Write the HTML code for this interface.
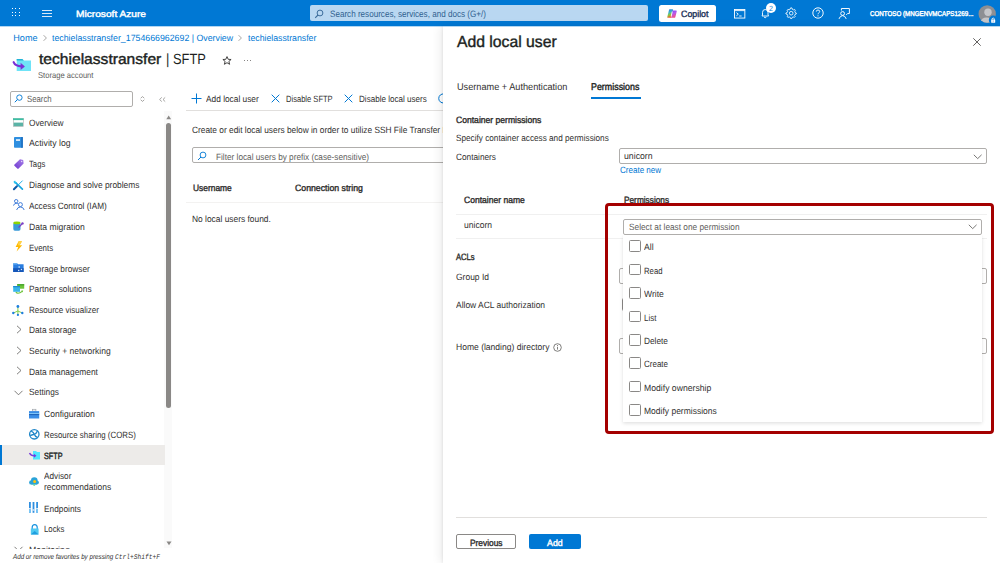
<!DOCTYPE html>
<html><head><meta charset="utf-8"><style>
html,body{margin:0;padding:0;}
body{width:1000px;height:563px;position:relative;overflow:hidden;background:#fff;font-family:"Liberation Sans",sans-serif;text-rendering:geometricPrecision;}
.t{position:absolute;white-space:nowrap;line-height:1;transform-origin:0 0;}
svg{overflow:visible;}
</style></head><body>
<div style="position:absolute;left:0px;top:0px;width:1000px;height:26px;background:#0078d4;"></div>
<div style="position:absolute;left:11.8px;top:8.3px;width:1.1px;height:1.1px;background:#fff;"></div>
<div style="position:absolute;left:11.8px;top:11.700000000000001px;width:1.1px;height:1.1px;background:#fff;"></div>
<div style="position:absolute;left:11.8px;top:15.100000000000001px;width:1.1px;height:1.1px;background:#fff;"></div>
<div style="position:absolute;left:15.200000000000001px;top:8.3px;width:1.1px;height:1.1px;background:#fff;"></div>
<div style="position:absolute;left:15.200000000000001px;top:11.700000000000001px;width:1.1px;height:1.1px;background:#fff;"></div>
<div style="position:absolute;left:15.200000000000001px;top:15.100000000000001px;width:1.1px;height:1.1px;background:#fff;"></div>
<div style="position:absolute;left:18.6px;top:8.3px;width:1.1px;height:1.1px;background:#fff;"></div>
<div style="position:absolute;left:18.6px;top:11.700000000000001px;width:1.1px;height:1.1px;background:#fff;"></div>
<div style="position:absolute;left:18.6px;top:15.100000000000001px;width:1.1px;height:1.1px;background:#fff;"></div>
<div style="position:absolute;left:42px;top:9.8px;width:9.5px;height:1px;background:#dbe9f7;"></div>
<div style="position:absolute;left:42px;top:12.8px;width:9.5px;height:1px;background:#dbe9f7;"></div>
<div style="position:absolute;left:42px;top:15.8px;width:9.5px;height:1px;background:#dbe9f7;"></div>
<div class="t" style="left:76px;top:9.78px;font-size:9.0px;font-weight:normal;font-style:normal;color:#fff;transform:scaleX(1.1286);-webkit-text-stroke:0.4px #fff;">Microsoft Azure</div>
<div style="position:absolute;left:310px;top:5px;width:338.4px;height:16.4px;background:#b9d7f1;border-radius:2px;"></div>
<svg style="position:absolute;left:314px;top:8.5px" width="10" height="10" viewBox="0 0 10 10"><circle cx="6" cy="4" r="2.9" fill="none" stroke="#3d6d9c" stroke-width="1"/><line x1="4" y1="6" x2="1.2" y2="8.8" stroke="#3d6d9c" stroke-width="1.1"/></svg>
<div class="t" style="left:329.5px;top:9.63px;font-size:9.3px;font-weight:normal;font-style:normal;color:#2f5f8f;transform:scaleX(0.8710);">Search resources, services, and docs (G+/)</div>
<div style="position:absolute;left:659px;top:5px;width:57.4px;height:16.5px;background:#fff;border-radius:2.5px;"></div>
<svg style="position:absolute;left:666.7px;top:8.8px" width="10.2" height="9" viewBox="0 0 10.2 9">
<defs><linearGradient id="cg1" x1="0" y1="0" x2="0.3" y2="1"><stop offset="0" stop-color="#1f6fe8"/><stop offset=".45" stop-color="#3fb6c8"/><stop offset=".7" stop-color="#8acb3a"/><stop offset="1" stop-color="#f4572a"/></linearGradient>
<linearGradient id="cg2" x1="0" y1="0" x2="0.4" y2="1"><stop offset="0" stop-color="#6a4cf0"/><stop offset=".5" stop-color="#b35af0"/><stop offset="1" stop-color="#f0508a"/></linearGradient></defs>
<path d="M2.6 0.2 H5.6 Q6.3 0.2 6.1 0.9 L4.0 8.8 H1.0 Q0.1 8.8 0.3 7.9 L2.0 0.9 Q2.2 0.2 2.6 0.2Z" fill="url(#cg1)"/>
<path d="M5.2 1.4 H9.0 Q10.0 1.4 9.8 2.3 L8.3 8.2 Q8.1 8.8 7.4 8.8 H3.3 Q4.3 8.4 4.6 7.2 Z" fill="url(#cg2)"/>
<path d="M5.3 2.6 L4.1 7.4" stroke="#fff" stroke-width="0.9"/>
</svg>
<div class="t" style="left:680.7px;top:9.80px;font-size:9.1px;font-weight:normal;font-style:normal;color:#26365a;transform:scaleX(0.9708);-webkit-text-stroke:0.4px #26365a;">Copilot</div>
<svg style="position:absolute;left:734px;top:8.5px" width="12" height="10" viewBox="0 0 12 10"><rect x="0.45" y="0.45" width="10.4" height="8.6" fill="none" stroke="#fff" stroke-width="0.9"/><line x1="0.5" y1="1.6" x2="10.8" y2="1.6" stroke="#fff" stroke-width="0.9"/><path d="M2.4 3.6 L4.3 5.2 L2.4 6.8" fill="none" stroke="#fff" stroke-width="0.9"/><line x1="5.2" y1="7" x2="7.6" y2="7" stroke="#fff" stroke-width="0.9"/></svg>
<svg style="position:absolute;left:760px;top:8px" width="11" height="11" viewBox="0 0 11 11"><path d="M2 8 L2.5 7 V4.5 Q2.5 1.5 5.2 1.5 Q8 1.5 8 4.5 V7 L8.6 8 Z" fill="none" stroke="#fff" stroke-width="0.9"/><path d="M4 9 Q5.2 10.5 6.4 9" fill="none" stroke="#fff" stroke-width="0.9"/></svg>
<div style="position:absolute;left:765.6px;top:2.8px;width:10px;height:10px;border-radius:50%;background:#fff;"></div>
<div class="t" style="left:768.6px;top:5.35px;font-size:7.5px;font-weight:normal;font-style:normal;color:#0078d4;transform:scaleX(0.9450);">2</div>
<svg style="position:absolute;left:785.3px;top:7px" width="12" height="12" viewBox="0 0 12 12"><path d="M6 0.8 L7 1 L7.3 2.3 L8.4 2.9 L9.6 2.4 L10.3 3.2 L9.8 4.5 L10.2 5.5 L11.3 6 L11.2 7 L10 7.4 L9.6 8.5 L10.2 9.6 L9.4 10.4 L8.2 9.9 L7.2 10.4 L6.8 11.5 L5.6 11.5 L5.2 10.3 L4.2 9.9 L3 10.4 L2.2 9.6 L2.7 8.4 L2.3 7.4 L1 7 L0.9 6 L2.2 5.5 L2.6 4.4 L2.1 3.2 L2.9 2.4 L4.1 2.9 L5.1 2.3 L5.4 1Z" fill="none" stroke="#fff" stroke-width="0.85" stroke-linejoin="round"/><circle cx="6.2" cy="6.2" r="1.8" fill="none" stroke="#fff" stroke-width="0.85"/></svg>
<svg style="position:absolute;left:811.5px;top:7px" width="12" height="12" viewBox="0 0 12 12"><circle cx="6" cy="6" r="5.2" fill="none" stroke="#fff" stroke-width="0.95"/><path d="M4.3 4.6 Q4.3 3 6 3 Q7.7 3 7.7 4.5 Q7.7 5.4 6.8 5.9 Q6 6.3 6 7.3" fill="none" stroke="#fff" stroke-width="0.9"/><circle cx="6" cy="8.8" r="0.6" fill="#fff"/></svg>
<svg style="position:absolute;left:837.5px;top:7.5px" width="13" height="12" viewBox="0 0 13 12"><path d="M3.4 2.5 V0.5 H11.4 V5.5 L9.6 5.6 L8.2 6.8" fill="none" stroke="#fff" stroke-width="0.95"/><circle cx="4.6" cy="5.5" r="1.9" fill="none" stroke="#fff" stroke-width="0.95"/><path d="M1 10.9 Q2 7.8 4.6 7.6 Q7.2 7.8 8.2 10.9" fill="none" stroke="#fff" stroke-width="0.95"/></svg>
<div class="t" style="left:869.8px;top:11.07px;font-size:7.0px;font-weight:normal;font-style:normal;color:#fff;transform:scaleX(0.8871);-webkit-text-stroke:0.4px #fff;">CONTOSO (MNGENVMCAPS1269...</div>
<svg style="position:absolute;left:978px;top:4.5px" width="20" height="20" viewBox="0 0 20 20">
<defs><clipPath id="avc"><circle cx="9.2" cy="9" r="8.7"/></clipPath></defs>
<circle cx="9.2" cy="9" r="8.7" fill="#8d8f93"/>
<g clip-path="url(#avc)"><circle cx="10" cy="7.2" r="3.7" fill="#c4c6ca"/><ellipse cx="8.5" cy="16.8" rx="5.8" ry="4.4" fill="#c4c6ca"/></g>
<circle cx="15.2" cy="15" r="4.4" fill="#0078d4"/>
<rect x="13.2" y="14.5" width="4" height="3.2" rx="0.5" fill="#fff"/>
<path d="M13.9 14.6 V13.8 Q15.2 12.2 16.5 13.8 V14.6" fill="none" stroke="#fff" stroke-width="0.8"/>
<rect x="14.7" y="15.4" width="1" height="1.4" fill="#8aaee0"/>
</svg>
<div class="t" style="left:13.3px;top:33.80px;font-size:9.1px;font-weight:normal;font-style:normal;color:#0078d4;">Home</div>
<svg style="position:absolute;left:42px;top:34.3px" width="6" height="8" viewBox="0 0 6 8"><path d="M1.6 1.2 L4.4 4 L1.6 6.8" fill="none" stroke="#8a8886" stroke-width="0.75"/></svg>
<div class="t" style="left:52px;top:33.80px;font-size:9.1px;font-weight:normal;font-style:normal;color:#0078d4;transform:scaleX(0.9663);">techielasstransfer_1754666962692 | Overview</div>
<svg style="position:absolute;left:237px;top:34.3px" width="6" height="8" viewBox="0 0 6 8"><path d="M1.6 1.2 L4.4 4 L1.6 6.8" fill="none" stroke="#8a8886" stroke-width="0.75"/></svg>
<div class="t" style="left:248.1px;top:33.80px;font-size:9.1px;font-weight:normal;font-style:normal;color:#0078d4;transform:scaleX(0.9591);">techielasstransfer</div>
<svg style="position:absolute;left:12px;top:58px" width="21" height="15" viewBox="0 0 21 15">
<path d="M4.7 1 H10.3 L11.8 2.5 H19 V13 H4.7 Z" fill="#6fe3f7"/>
<path d="M4.7 1 H10.3 L11.8 2.5 H4.7Z" fill="#22b3d6"/>
<path d="M1.6 4.2 Q3.2 8.3 9.5 8.4" fill="none" stroke="#7a2fd6" stroke-width="2.1" stroke-linecap="round"/>
<path d="M8.6 4.8 L12.9 8.4 L8.6 12Z" fill="#7a2fd6"/>
</svg>
<div class="t" style="left:38.5px;top:52.87px;font-size:14.8px;font-weight:normal;font-style:normal;color:#201f1e;transform:scaleX(1.0544);-webkit-text-stroke:0.4px #201f1e;">techielasstransfer</div>
<div class="t" style="left:165.5px;top:52.87px;font-size:14.8px;font-weight:normal;font-style:normal;color:#201f1e;transform:scaleX(0.8715);">| SFTP</div>
<svg style="position:absolute;left:222px;top:56px" width="10" height="9" viewBox="0 0 10 9"><path d="M5 0.6 L6.2 3.3 L9.1 3.5 L6.9 5.4 L7.6 8.3 L5 6.7 L2.4 8.3 L3.1 5.4 L0.9 3.5 L3.8 3.3Z" fill="none" stroke="#323130" stroke-width="0.9" stroke-linejoin="round"/></svg>
<div style="position:absolute;left:244.2px;top:60px;width:1.1px;height:1.1px;background:#605e5c;border-radius:50%;"></div>
<div style="position:absolute;left:247.2px;top:60px;width:1.1px;height:1.1px;background:#605e5c;border-radius:50%;"></div>
<div style="position:absolute;left:250.2px;top:60px;width:1.1px;height:1.1px;background:#605e5c;border-radius:50%;"></div>
<div class="t" style="left:38px;top:71.47px;font-size:8.3px;font-weight:normal;font-style:normal;color:#605e5c;transform:scaleX(0.9181);">Storage account</div>
<div style="position:absolute;left:10.4px;top:91px;width:122.2px;height:15.6px;box-sizing:border-box;border:1px solid #b0aeac;border-radius:2px;background:#fff;"></div>
<svg style="position:absolute;left:14px;top:94px" width="9" height="9" viewBox="0 0 9 9"><circle cx="5.4" cy="3.6" r="2.7" fill="none" stroke="#0078d4" stroke-width="0.9"/><line x1="3.5" y1="5.5" x2="0.8" y2="8.2" stroke="#0078d4" stroke-width="1"/></svg>
<div class="t" style="left:26.6px;top:94.90px;font-size:9.1px;font-weight:normal;font-style:normal;color:#605e5c;transform:scaleX(0.8566);">Search</div>
<svg style="position:absolute;left:140px;top:95.5px" width="5" height="6" viewBox="0 0 5 6"><path d="M0.7 2.2 L2.5 0.6 L4.3 2.2 M0.7 3.8 L2.5 5.4 L4.3 3.8" fill="none" stroke="#8a8886" stroke-width="0.75"/></svg>
<svg style="position:absolute;left:158.8px;top:96.5px" width="7" height="5" viewBox="0 0 7 5"><path d="M2.8 0.4 L0.6 2.5 L2.8 4.6 M6.2 0.4 L4 2.5 L6.2 4.6" fill="none" stroke="#8a8886" stroke-width="0.75"/></svg>
<div style="position:absolute;left:164.2px;top:111px;width:8px;height:437px;background:#fafafa;"></div>
<svg style="position:absolute;left:165.8px;top:114.6px" width="6" height="5" viewBox="0 0 6 5"><path d="M0.3 4.3 L2.7 0.6 L5.1 4.3Z" fill="#8a8886"/></svg>
<div style="position:absolute;left:166px;top:122.8px;width:5px;height:285.2px;background:#8a8886;border-radius:2.5px;"></div>
<svg style="position:absolute;left:165.5px;top:541px" width="6" height="5" viewBox="0 0 6 5"><path d="M0.5 0.5 L3 4.2 L5.5 0.5Z" fill="#8a8886"/></svg>
<div style="position:absolute;left:0px;top:444.5px;width:164.7px;height:20.5px;background:#edebe9;"></div>
<div style="position:absolute;left:0px;top:444.5px;width:1.8px;height:20.5px;background:#0078d4;"></div>
<div class="t" style="left:28.6px;top:118.70px;font-size:9.1px;font-weight:normal;font-style:normal;color:#323130;transform:scaleX(0.9097);">Overview</div>
<div class="t" style="left:28.6px;top:139.10px;font-size:9.1px;font-weight:normal;font-style:normal;color:#323130;transform:scaleX(0.9588);">Activity log</div>
<div class="t" style="left:28.6px;top:159.90px;font-size:9.1px;font-weight:normal;font-style:normal;color:#323130;transform:scaleX(0.8480);">Tags</div>
<div class="t" style="left:28.6px;top:181.00px;font-size:9.1px;font-weight:normal;font-style:normal;color:#323130;transform:scaleX(0.9217);">Diagnose and solve problems</div>
<div class="t" style="left:28.6px;top:202.00px;font-size:9.1px;font-weight:normal;font-style:normal;color:#323130;transform:scaleX(0.9050);">Access Control (IAM)</div>
<div class="t" style="left:28.6px;top:222.70px;font-size:9.1px;font-weight:normal;font-style:normal;color:#323130;transform:scaleX(0.9446);">Data migration</div>
<div class="t" style="left:28.6px;top:243.50px;font-size:9.1px;font-weight:normal;font-style:normal;color:#323130;transform:scaleX(0.8663);">Events</div>
<div class="t" style="left:28.6px;top:264.50px;font-size:9.1px;font-weight:normal;font-style:normal;color:#323130;transform:scaleX(0.9106);">Storage browser</div>
<div class="t" style="left:28.6px;top:285.20px;font-size:9.1px;font-weight:normal;font-style:normal;color:#323130;transform:scaleX(0.9167);">Partner solutions</div>
<div class="t" style="left:28.6px;top:306.00px;font-size:9.1px;font-weight:normal;font-style:normal;color:#323130;transform:scaleX(0.8816);">Resource visualizer</div>
<div class="t" style="left:28.6px;top:325.70px;font-size:9.1px;font-weight:normal;font-style:normal;color:#323130;transform:scaleX(0.9116);">Data storage</div>
<div class="t" style="left:28.6px;top:346.70px;font-size:9.1px;font-weight:normal;font-style:normal;color:#323130;transform:scaleX(0.9364);">Security + networking</div>
<div class="t" style="left:28.6px;top:367.50px;font-size:9.1px;font-weight:normal;font-style:normal;color:#323130;transform:scaleX(0.9216);">Data management</div>
<div class="t" style="left:28.6px;top:388.00px;font-size:9.1px;font-weight:normal;font-style:normal;color:#323130;transform:scaleX(0.9124);">Settings</div>
<div class="t" style="left:44.4px;top:410.10px;font-size:9.1px;font-weight:normal;font-style:normal;color:#323130;transform:scaleX(0.9403);">Configuration</div>
<div class="t" style="left:44.4px;top:431.20px;font-size:9.1px;font-weight:normal;font-style:normal;color:#323130;transform:scaleX(0.8653);">Resource sharing (CORS)</div>
<div class="t" style="left:44.4px;top:451.90px;font-size:9.1px;font-weight:normal;font-style:normal;color:#201f1e;transform:scaleX(0.7954);-webkit-text-stroke:0.4px #201f1e;">SFTP</div>
<div class="t" style="left:44.4px;top:472.20px;font-size:9.1px;font-weight:normal;font-style:normal;color:#323130;transform:scaleX(0.9030);">Advisor</div>
<div class="t" style="left:44.4px;top:483.40px;font-size:9.1px;font-weight:normal;font-style:normal;color:#323130;transform:scaleX(0.9304);">recommendations</div>
<div class="t" style="left:44.4px;top:504.60px;font-size:9.1px;font-weight:normal;font-style:normal;color:#323130;transform:scaleX(0.9141);">Endpoints</div>
<div class="t" style="left:44.4px;top:525.20px;font-size:9.1px;font-weight:normal;font-style:normal;color:#323130;transform:scaleX(0.8581);">Locks</div>
<div style="position:absolute;left:0;top:540px;width:164px;height:8.9px;overflow:hidden;">
<div class="t" style="left:28.9px;top:6.10px;font-size:9.1px;font-weight:normal;font-style:normal;color:#323130;transform:scaleX(0.9602);">Monitoring</div>
<svg style="position:absolute;left:14px;top:6.3px" width="9" height="6" viewBox="0 0 9 6"><path d="M0.5 0.8 L4.5 4.8 L8.5 0.8" fill="none" stroke="#605e5c" stroke-width="0.8"/></svg>
</div>
<div class="t" style="left:12.8px;top:553.11px;font-size:7.2px;font-weight:normal;font-style:italic;color:#323130;transform:scaleX(0.8702);">Add or remove favorites by pressing</div>
<div class="t" style="left:114.8px;top:554.68px;font-size:7.2px;font-weight:normal;font-style:italic;color:#323130;transform:scaleX(0.8699);font-family:'Liberation Mono',monospace;">Ctrl+Shift+F</div>
<svg style="position:absolute;left:16px;top:324.5px" width="6" height="9" viewBox="0 0 6 9"><path d="M1 0.8 L5 4.5 L1 8.2" fill="none" stroke="#605e5c" stroke-width="0.8"/></svg>
<svg style="position:absolute;left:16px;top:345.5px" width="6" height="9" viewBox="0 0 6 9"><path d="M1 0.8 L5 4.5 L1 8.2" fill="none" stroke="#605e5c" stroke-width="0.8"/></svg>
<svg style="position:absolute;left:16px;top:366.3px" width="6" height="9" viewBox="0 0 6 9"><path d="M1 0.8 L5 4.5 L1 8.2" fill="none" stroke="#605e5c" stroke-width="0.8"/></svg>
<svg style="position:absolute;left:14px;top:390px" width="9" height="6" viewBox="0 0 9 6"><path d="M0.5 0.8 L4.5 4.8 L8.5 0.8" fill="none" stroke="#605e5c" stroke-width="0.8"/></svg>
<svg style="position:absolute;left:13px;top:117.5px" width="11" height="10" viewBox="0 0 11 10"><rect x="0.3" y="0.6" width="10" height="7.8" fill="#fff" stroke="#b0b0b0" stroke-width="0.6"/><rect x="0" y="0.3" width="10.6" height="1.8" fill="#3cbfa4"/><rect x="0.6" y="4.6" width="9.4" height="3.6" fill="#5bb3a6"/></svg>
<svg style="position:absolute;left:13.8px;top:137.4px" width="10" height="11" viewBox="0 0 10 11"><rect x="0" y="0" width="8.8" height="10.8" rx="0.8" fill="#2f8fe0"/><rect x="7.2" y="0" width="1.6" height="10.8" fill="#1f6fc0"/><rect x="2" y="2.3" width="4" height="1.5" fill="#fff"/></svg>
<svg style="position:absolute;left:13.5px;top:158.6px" width="10" height="10" viewBox="0 0 10 10"><defs><linearGradient id="tg" x1="0" y1="1" x2="1" y2="0"><stop offset="0" stop-color="#6f3ad0"/><stop offset="1" stop-color="#a67ee8"/></linearGradient></defs><path d="M6 0.3 L9.2 1 L9.6 4.4 L4.6 9.6 Q4 10.2 3.3 9.6 L0.4 6.8 Q-0.1 6.2 0.5 5.6 Z" fill="url(#tg)"/><circle cx="7.6" cy="2.5" r="0.75" fill="#e0d4f8"/></svg>
<svg style="position:absolute;left:13.3px;top:179.8px" width="11" height="11" viewBox="0 0 11 11"><path d="M2.6 2.6 L9.4 9.2" stroke="#1aa7e0" stroke-width="1.7" stroke-linecap="round"/><path d="M0.6 1.4 Q0.4 3.6 2.6 3.8 Q4 3.6 3.9 2.2 L2.6 2.1 L2.4 0.8 Q1.2 0.4 0.6 1.4Z" fill="#2ac2ee"/><path d="M9.6 0.6 L3.6 6.6" stroke="#22b0e8" stroke-width="1"/><path d="M3.9 6.3 L0.9 9.3" stroke="#0f5aa8" stroke-width="2" stroke-linecap="round"/></svg>
<svg style="position:absolute;left:12.6px;top:199.4px" width="12" height="12" viewBox="0 0 12 12"><circle cx="3.2" cy="2.2" r="1.7" fill="none" stroke="#3a78d8" stroke-width="0.95"/><path d="M0.5 6.6 Q1 4.4 3.2 4.3 Q4.6 4.3 5.2 5" fill="none" stroke="#3a78d8" stroke-width="0.95"/><circle cx="7.4" cy="5.6" r="2" fill="none" stroke="#3a78d8" stroke-width="0.95"/><path d="M3.6 11 Q4.4 8 7.4 8 Q10.4 8 11.2 11" fill="none" stroke="#3a78d8" stroke-width="0.95"/></svg>
<svg style="position:absolute;left:12.7px;top:221.3px" width="11" height="11" viewBox="0 0 11 11"><rect x="0.3" y="1.4" width="7.2" height="8.3" rx="1.6" fill="#3a9ad9"/><ellipse cx="3.9" cy="1.9" rx="3.6" ry="1.4" fill="#8fd400"/><line x1="5.6" y1="6.5" x2="9.3" y2="2.7" stroke="#7b3fc4" stroke-width="1.2"/><circle cx="9.5" cy="2.4" r="1.2" fill="#7b3fc4"/></svg>
<svg style="position:absolute;left:14.3px;top:241.3px" width="9" height="11" viewBox="0 0 9 11"><path d="M4.6 0.3 H8 L5.6 4.2 H8.2 L2.6 10.6 L4.2 6 H1.6 Z" fill="#ffb900"/><path d="M4.6 0.3 H8 L5.6 4.2 H4 Z" fill="#ffd24a"/></svg>
<svg style="position:absolute;left:12.8px;top:263.3px" width="11" height="10" viewBox="0 0 11 10"><path d="M0.2 0.2 H4 L5 1.2 H10.6 V9 H0.2Z" fill="#2a7de0"/><rect x="0.2" y="0.2" width="4" height="1.3" fill="#6fb6f5"/><rect x="0.2" y="5.2" width="10.4" height="3.8" fill="#1556b8"/><rect x="5.5" y="3.3" width="1.4" height="1.4" fill="#cfe6fb"/><rect x="7.8" y="5.8" width="1.3" height="1.3" fill="#cfe6fb"/><rect x="5" y="6.8" width="1.3" height="1.3" fill="#cfe6fb"/></svg>
<svg style="position:absolute;left:12.6px;top:283.6px" width="12" height="11" viewBox="0 0 12 11"><rect x="4.2" y="0.2" width="7" height="4.5" fill="#6cc43a"/><rect x="4.2" y="0.2" width="7" height="1.2" fill="#3f9e2a"/><rect x="0.2" y="2" width="6.8" height="5.8" fill="#38b6ea"/><rect x="0.2" y="2" width="6.8" height="1.3" fill="#1f8ad0"/><path d="M2.8 8.2 Q5 10.6 9.4 7.2" fill="none" stroke="#6cc43a" stroke-width="1.1"/><path d="M8.2 6.6 L10.2 6.4 L9.6 8.4Z" fill="#6cc43a"/></svg>
<svg style="position:absolute;left:12.3px;top:304.5px" width="12" height="11" viewBox="0 0 12 11"><path d="M5.9 1.5 V6 M1.3 8 L5.9 6 L10.3 8 M5.9 6 V9.8" stroke="#7acb3a" stroke-width="0.9" fill="none"/><circle cx="5.9" cy="1.5" r="1.4" fill="#1f7fe0"/><circle cx="1.3" cy="8" r="1.2" fill="#1f7fe0"/><circle cx="10.3" cy="8" r="1.2" fill="#1f7fe0"/><circle cx="5.9" cy="9.9" r="1.1" fill="#1f7fe0"/></svg>
<svg style="position:absolute;left:28.9px;top:408.6px" width="11" height="10" viewBox="0 0 11 10"><rect x="3.5" y="0.3" width="3.4" height="1.8" fill="none" stroke="#a0a6ad" stroke-width="0.7"/><rect x="0" y="2.1" width="10.2" height="7.4" fill="#3a8de6"/><rect x="0" y="4.2" width="10.2" height="1" fill="#8fd0fa"/><rect x="0" y="5.2" width="10.2" height="0.9" fill="#1459b0"/></svg>
<svg style="position:absolute;left:28.7px;top:429.3px" width="11" height="11" viewBox="0 0 11 11"><circle cx="5.3" cy="5.3" r="4.7" fill="none" stroke="#1f86c8" stroke-width="1.3"/><path d="M1.2 6.6 Q3.6 5.6 5.3 5.3 Q7.4 4.6 8.6 1.8 M2.2 2.2 Q4.5 3.2 5.3 5.3 Q6 7.5 8.8 8.6" fill="none" stroke="#1f86c8" stroke-width="1.4"/></svg>
<svg style="position:absolute;left:28.5px;top:450px" width="12" height="11" viewBox="0 0 12 11"><path d="M4 1 H7 L8 2 H11 V9.5 H4 Z" fill="#50e6ff"/><path d="M0.5 3 Q2 6 5.5 5.8" fill="none" stroke="#773adc" stroke-width="1.4"/><path d="M5 3.8 L7.5 5.8 L5 7.8Z" fill="#773adc"/></svg>
<svg style="position:absolute;left:28.8px;top:477.3px" width="10" height="10" viewBox="0 0 10 10"><circle cx="5.3" cy="3.6" r="3.3" fill="#2aa3d8"/><circle cx="2.3" cy="5.4" r="2.2" fill="#2aa3d8"/><circle cx="7.9" cy="5.6" r="2" fill="#2aa3d8"/><rect x="2.3" y="5" width="5.6" height="2.6" fill="#2aa3d8"/><circle cx="5.6" cy="4.6" r="1.5" fill="#ffc20e"/><path d="M3.6 7.2 Q5.2 10.6 6.8 7.2Z" fill="#5fd0a0"/></svg>
<svg style="position:absolute;left:29.4px;top:502.2px" width="9" height="11" viewBox="0 0 9 11"><rect x="0" y="0" width="1.8" height="10.8" fill="#2f8fe0"/><rect x="3.6" y="0" width="1.8" height="10.8" fill="#2f8fe0"/><rect x="7.2" y="0" width="1.8" height="10.8" fill="#2f8fe0"/><rect x="0" y="6.2" width="1.8" height="1.2" fill="#fff"/><rect x="3.6" y="7.4" width="1.8" height="1.2" fill="#fff"/><rect x="7.2" y="6.2" width="1.8" height="1.2" fill="#fff"/><rect x="0" y="7.4" width="1.8" height="3.4" fill="#7cc8f5"/><rect x="7.2" y="7.4" width="1.8" height="3.4" fill="#7cc8f5"/></svg>
<svg style="position:absolute;left:29.5px;top:523.5px" width="10" height="11" viewBox="0 0 10 11"><path d="M2.2 5 V3.2 Q2.2 0.7 4.7 0.7 Q7.2 0.7 7.2 3.2 V5" fill="none" stroke="#1490df" stroke-width="1.2"/><rect x="0.8" y="4.5" width="7.8" height="6" fill="#50c8f0"/><path d="M0.8 10.5 L4.7 7 L8.6 10.5Z" fill="#1f9ee0"/></svg>
<svg style="position:absolute;left:190.5px;top:93px" width="11" height="11" viewBox="0 0 11 11"><path d="M5.5 0.5 V10.5 M0.5 5.5 H10.5" stroke="#0078d4" stroke-width="1"/></svg>
<div class="t" style="left:206.3px;top:94.60px;font-size:9.1px;font-weight:normal;font-style:normal;color:#323130;transform:scaleX(0.9156);">Add local user</div>
<svg style="position:absolute;left:270.5px;top:93.5px" width="9" height="9" viewBox="0 0 9 9"><path d="M0.7 0.7 L8.3 8.3 M8.3 0.7 L0.7 8.3" stroke="#0078d4" stroke-width="1"/></svg>
<div class="t" style="left:285.7px;top:94.60px;font-size:9.1px;font-weight:normal;font-style:normal;color:#323130;transform:scaleX(0.8319);">Disable SFTP</div>
<svg style="position:absolute;left:344px;top:93.5px" width="9" height="9" viewBox="0 0 9 9"><path d="M0.7 0.7 L8.3 8.3 M8.3 0.7 L0.7 8.3" stroke="#0078d4" stroke-width="1"/></svg>
<div class="t" style="left:359px;top:94.60px;font-size:9.1px;font-weight:normal;font-style:normal;color:#323130;transform:scaleX(0.8890);">Disable local users</div>
<svg style="position:absolute;left:437.5px;top:93px" width="11" height="11" viewBox="0 0 11 11"><path d="M6 1 A4.5 4.5 0 1 0 9.5 4" fill="none" stroke="#0078d4" stroke-width="1"/></svg>
<div style="position:absolute;left:185.6px;top:109.7px;width:260px;height:1px;background:#e1dfdd;"></div>
<div class="t" style="left:192px;top:126.20px;font-size:9.1px;font-weight:normal;font-style:normal;color:#323130;transform:scaleX(0.9159);">Create or edit local users below in order to utilize SSH File Transfer Protocol</div>
<div style="position:absolute;left:192.2px;top:147.2px;width:260px;height:16.1px;box-sizing:border-box;border:1px solid #b0aeac;border-radius:2px;background:#fff;"></div>
<svg style="position:absolute;left:196.5px;top:150.5px" width="10" height="10" viewBox="0 0 10 10"><circle cx="6" cy="4" r="2.9" fill="none" stroke="#0078d4" stroke-width="0.9"/><line x1="4" y1="6" x2="1" y2="9" stroke="#0078d4" stroke-width="1"/></svg>
<div class="t" style="left:215.5px;top:152.70px;font-size:9.1px;font-weight:normal;font-style:normal;color:#605e5c;transform:scaleX(0.9043);">Filter local users by prefix (case-sensitive)</div>
<div class="t" style="left:193px;top:184.20px;font-size:9.1px;font-weight:normal;font-style:normal;color:#323130;transform:scaleX(0.9243);-webkit-text-stroke:0.4px #323130;">Username</div>
<div class="t" style="left:295.1px;top:184.20px;font-size:9.1px;font-weight:normal;font-style:normal;color:#323130;transform:scaleX(0.9588);-webkit-text-stroke:0.4px #323130;">Connection string</div>
<div style="position:absolute;left:185.6px;top:201.8px;width:260px;height:1px;background:#f3f2f1;"></div>
<div class="t" style="left:191.7px;top:215.20px;font-size:9.1px;font-weight:normal;font-style:normal;color:#323130;transform:scaleX(0.9229);">No local users found.</div>
<div style="position:absolute;left:443.4px;top:26px;width:556.6px;height:537px;background:#fff;box-shadow:-3px 0 9px rgba(0,0,0,0.07),-1px 0 2px rgba(0,0,0,0.06);"></div>
<div class="t" style="left:457px;top:34.66px;font-size:16px;font-weight:normal;font-style:normal;color:#201f1e;transform:scaleX(0.9833);-webkit-text-stroke:0.4px #201f1e;">Add local user</div>
<svg style="position:absolute;left:973px;top:38px" width="8" height="8" viewBox="0 0 8 8"><path d="M0.3 0.3 L7.7 7.7 M7.7 0.3 L0.3 7.7" stroke="#484644" stroke-width="0.85"/></svg>
<div class="t" style="left:456.6px;top:83.20px;font-size:9.8px;font-weight:normal;font-style:normal;color:#323130;transform:scaleX(0.9360);">Username + Authentication</div>
<div class="t" style="left:590.8px;top:83.20px;font-size:9.8px;font-weight:normal;font-style:normal;color:#201f1e;transform:scaleX(0.9069);-webkit-text-stroke:0.4px #201f1e;">Permissions</div>
<div style="position:absolute;left:590.5px;top:96.5px;width:50px;height:2px;background:#0078d4;"></div>
<div class="t" style="left:456px;top:116.20px;font-size:9.1px;font-weight:normal;font-style:normal;color:#323130;transform:scaleX(0.9433);-webkit-text-stroke:0.4px #323130;">Container permissions</div>
<div class="t" style="left:456px;top:134.10px;font-size:9.1px;font-weight:normal;font-style:normal;color:#323130;transform:scaleX(0.9023);">Specify container access and permissions</div>
<div class="t" style="left:456px;top:153.20px;font-size:9.1px;font-weight:normal;font-style:normal;color:#323130;transform:scaleX(0.9089);">Containers</div>
<div style="position:absolute;left:619.3px;top:148.3px;width:367.4px;height:15.3px;box-sizing:border-box;border:1px solid #b0aeac;border-radius:2px;background:#fff;"></div>
<div class="t" style="left:624.3px;top:152.10px;font-size:9.1px;font-weight:normal;font-style:normal;color:#323130;transform:scaleX(0.9582);">unicorn</div>
<svg style="position:absolute;left:973px;top:153.8px" width="10" height="6" viewBox="0 0 10 6"><path d="M0.8 0.8 L4.7 4.6 L8.6 0.8" fill="none" stroke="#605e5c" stroke-width="0.85"/></svg>
<div class="t" style="left:619.5px;top:166.00px;font-size:9.1px;font-weight:normal;font-style:normal;color:#0078d4;transform:scaleX(0.8832);">Create new</div>
<div class="t" style="left:464.4px;top:196.20px;font-size:9.1px;font-weight:normal;font-style:normal;color:#323130;transform:scaleX(0.9390);-webkit-text-stroke:0.4px #323130;">Container name</div>
<div class="t" style="left:623.6px;top:196.20px;font-size:9.1px;font-weight:normal;font-style:normal;color:#323130;transform:scaleX(0.9100);-webkit-text-stroke:0.4px #323130;">Permissions</div>
<div style="position:absolute;left:456px;top:214px;width:531px;height:1px;background:#f0f0f0;"></div>
<div class="t" style="left:464.4px;top:221.10px;font-size:9.1px;font-weight:normal;font-style:normal;color:#323130;transform:scaleX(0.9381);">unicorn</div>
<div style="position:absolute;left:456px;top:238.3px;width:531px;height:1px;background:#f0f0f0;"></div>
<div class="t" style="left:456px;top:253.00px;font-size:9.1px;font-weight:normal;font-style:normal;color:#323130;transform:scaleX(0.8403);-webkit-text-stroke:0.4px #323130;">ACLs</div>
<div class="t" style="left:456px;top:273.20px;font-size:9.1px;font-weight:normal;font-style:normal;color:#323130;transform:scaleX(0.9319);">Group Id</div>
<div style="position:absolute;left:618.8px;top:268.2px;width:368px;height:15.6px;box-sizing:border-box;border:1px solid #b0aeac;border-radius:2px;background:#fff;"></div>
<div class="t" style="left:456px;top:301.10px;font-size:9.1px;font-weight:normal;font-style:normal;color:#323130;transform:scaleX(0.9303);">Allow ACL authorization</div>
<div style="position:absolute;left:621.8px;top:298px;width:13px;height:13px;box-sizing:border-box;border:1px solid #8a8886;border-radius:1.5px;background:#fff;"></div>
<div class="t" style="left:456px;top:342.90px;font-size:9.1px;font-weight:normal;font-style:normal;color:#323130;transform:scaleX(0.9384);">Home (landing) directory</div>
<svg style="position:absolute;left:552.5px;top:343px" width="9" height="9" viewBox="0 0 9 9"><circle cx="4.5" cy="4.5" r="3.8" fill="none" stroke="#605e5c" stroke-width="0.8"/><line x1="4.5" y1="3.8" x2="4.5" y2="6.6" stroke="#605e5c" stroke-width="0.8"/><circle cx="4.5" cy="2.5" r="0.5" fill="#605e5c"/></svg>
<div style="position:absolute;left:618.8px;top:338.2px;width:368px;height:15.5px;box-sizing:border-box;border:1px solid #b0aeac;border-radius:2px;background:#fff;"></div>
<div style="position:absolute;left:456px;top:517px;width:531px;height:1px;background:#e1dfdd;"></div>
<div style="position:absolute;left:456.2px;top:534.1px;width:59.7px;height:15.2px;box-sizing:border-box;border:1px solid #8a8886;border-radius:2px;background:#fff;"></div>
<div class="t" style="left:469.8px;top:538.50px;font-size:9.1px;font-weight:normal;font-style:normal;color:#323130;transform:scaleX(0.9179);-webkit-text-stroke:0.4px #323130;">Previous</div>
<div style="position:absolute;left:529.3px;top:534.1px;width:51.7px;height:15.2px;background:#0078d4;border-radius:2px;"></div>
<div class="t" style="left:547.4px;top:538.50px;font-size:9.1px;font-weight:normal;font-style:normal;color:#fff;transform:scaleX(0.9696);-webkit-text-stroke:0.4px #fff;">Add</div>
<div style="position:absolute;left:623.3px;top:219.3px;width:358.5px;height:15.6px;box-sizing:border-box;border:1px solid #b0aeac;border-radius:2px;background:#fff;"></div>
<div class="t" style="left:629.4px;top:222.90px;font-size:9.1px;font-weight:normal;font-style:normal;color:#605e5c;transform:scaleX(0.9110);">Select at least one permission</div>
<svg style="position:absolute;left:968.2px;top:224.4px" width="10" height="6" viewBox="0 0 10 6"><path d="M0.8 0.8 L4.7 4.6 L8.6 0.8" fill="none" stroke="#605e5c" stroke-width="0.85"/></svg>
<div style="position:absolute;left:623.3px;top:235px;width:358.5px;height:187.4px;background:#fff;box-shadow:0 1.6px 3.6px rgba(0,0,0,0.13),0 0.3px 0.9px rgba(0,0,0,0.11);"></div>
<div style="position:absolute;left:628.9px;top:240.4px;width:12.1px;height:11.6px;box-sizing:border-box;border:1px solid #8a8886;border-radius:1.5px;background:#fff;"></div>
<div class="t" style="left:644.2px;top:243.40px;font-size:9.1px;font-weight:normal;font-style:normal;color:#323130;transform:scaleX(0.9492);">All</div>
<div style="position:absolute;left:628.9px;top:263.8px;width:12.1px;height:11.6px;box-sizing:border-box;border:1px solid #8a8886;border-radius:1.5px;background:#fff;"></div>
<div class="t" style="left:644.2px;top:266.80px;font-size:9.1px;font-weight:normal;font-style:normal;color:#323130;transform:scaleX(0.8504);">Read</div>
<div style="position:absolute;left:628.9px;top:287.2px;width:12.1px;height:11.6px;box-sizing:border-box;border:1px solid #8a8886;border-radius:1.5px;background:#fff;"></div>
<div class="t" style="left:644.2px;top:290.20px;font-size:9.1px;font-weight:normal;font-style:normal;color:#323130;transform:scaleX(0.9446);">Write</div>
<div style="position:absolute;left:628.9px;top:310.6px;width:12.1px;height:11.6px;box-sizing:border-box;border:1px solid #8a8886;border-radius:1.5px;background:#fff;"></div>
<div class="t" style="left:644.2px;top:313.60px;font-size:9.1px;font-weight:normal;font-style:normal;color:#323130;transform:scaleX(0.8756);">List</div>
<div style="position:absolute;left:628.9px;top:334.0px;width:12.1px;height:11.6px;box-sizing:border-box;border:1px solid #8a8886;border-radius:1.5px;background:#fff;"></div>
<div class="t" style="left:644.2px;top:337.00px;font-size:9.1px;font-weight:normal;font-style:normal;color:#323130;transform:scaleX(0.9124);">Delete</div>
<div style="position:absolute;left:628.9px;top:357.4px;width:12.1px;height:11.6px;box-sizing:border-box;border:1px solid #8a8886;border-radius:1.5px;background:#fff;"></div>
<div class="t" style="left:644.2px;top:360.40px;font-size:9.1px;font-weight:normal;font-style:normal;color:#323130;transform:scaleX(0.8787);">Create</div>
<div style="position:absolute;left:628.9px;top:380.79999999999995px;width:12.1px;height:11.6px;box-sizing:border-box;border:1px solid #8a8886;border-radius:1.5px;background:#fff;"></div>
<div class="t" style="left:644.2px;top:383.80px;font-size:9.1px;font-weight:normal;font-style:normal;color:#323130;transform:scaleX(0.9504);">Modify ownership</div>
<div style="position:absolute;left:628.9px;top:404.2px;width:12.1px;height:11.6px;box-sizing:border-box;border:1px solid #8a8886;border-radius:1.5px;background:#fff;"></div>
<div class="t" style="left:644.2px;top:407.20px;font-size:9.1px;font-weight:normal;font-style:normal;color:#323130;transform:scaleX(0.9348);">Modify permissions</div>
<div style="position:absolute;left:0px;top:26px;width:1000px;height:1px;background:rgba(0,120,212,0.3);"></div>
<div style="position:absolute;left:604.8px;top:203px;width:389.5px;height:231.2px;box-sizing:border-box;border:3.5px solid #a40000;border-radius:4px;"></div>
</body></html>
